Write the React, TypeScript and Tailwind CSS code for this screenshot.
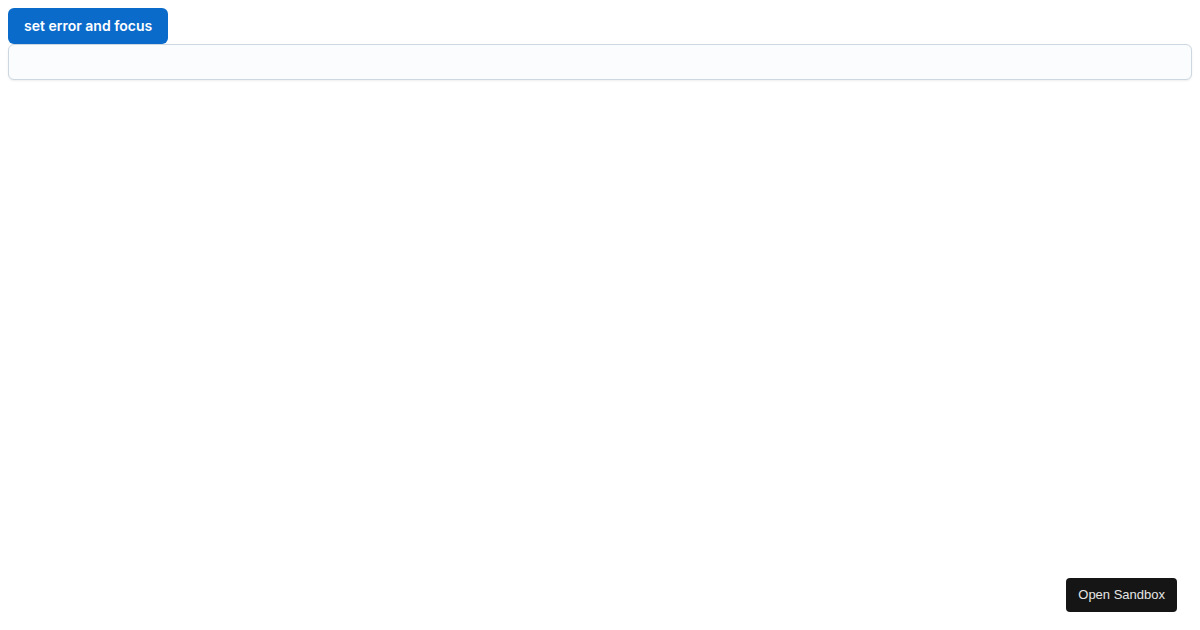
import React from 'react';

export default function App() {
  return (
    <div className="relative h-[630px] w-[1200px] bg-white p-2 font-['Inter',sans-serif]">
      <div className="flex flex-col items-start">
        <button className="h-9 rounded-md bg-[#0b6bcb] px-4 text-sm font-semibold text-white">
          set error and focus
        </button>
        <div className="h-9 w-full rounded-md border border-[#cdd7e1] bg-[#fbfcfe] shadow-[0_1px_2px_rgba(21,21,21,0.08)]" />
      </div>

      {/* floating link */}
      <button className="absolute bottom-[18px] right-[23px] h-[34px] rounded bg-[#151515] px-3 text-[13px] text-[#e5e5e5] font-['Liberation_Sans',sans-serif]">
        Open Sandbox
      </button>
    </div>
  );
}
